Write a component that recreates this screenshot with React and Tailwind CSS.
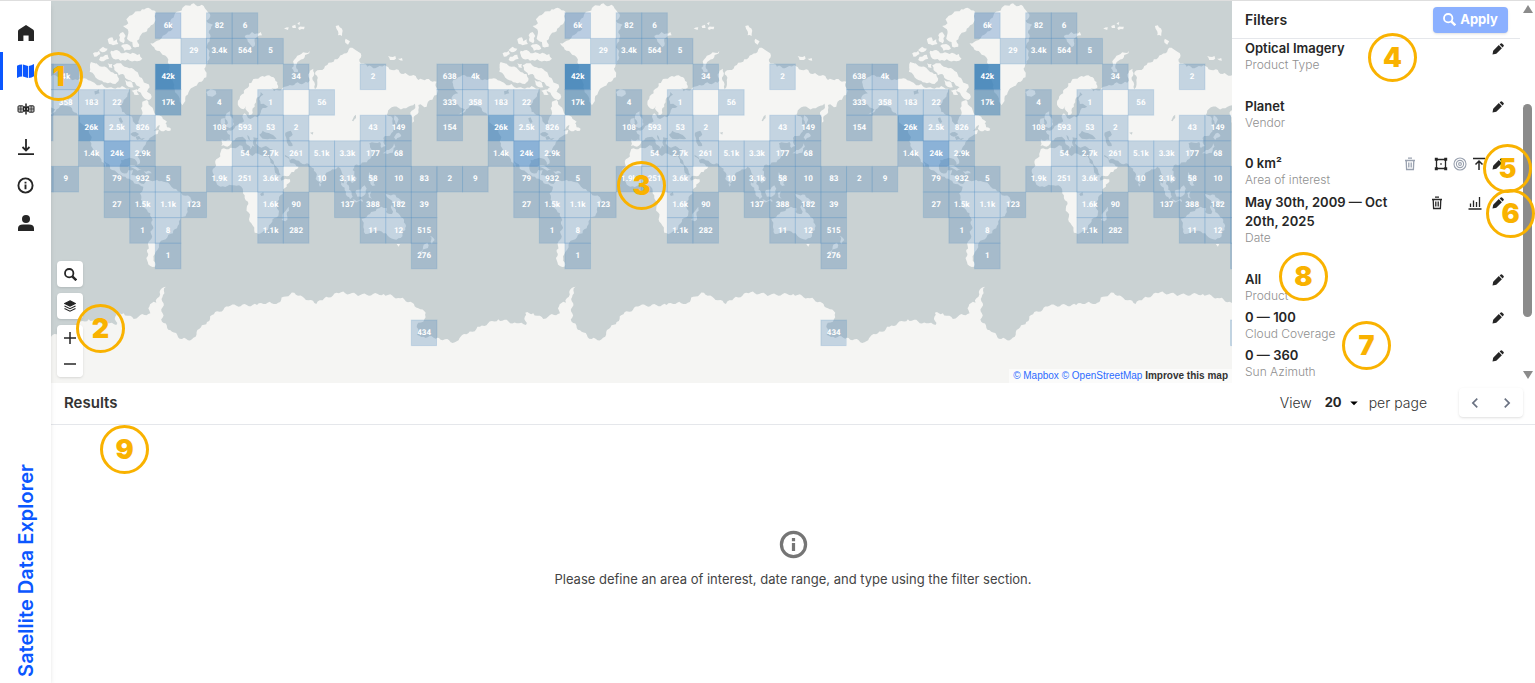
import { useState } from 'react';
import { MdArrowDropDown, MdChevronLeft, MdChevronRight } from 'react-icons/md';

// One world copy is 16 cells wide, coordinates are in thirds of a pixel
const CELL = 76.8;
const WORLD = CELL * 16;

// row: [column, label]
const CELLS = {
  1: [[5, '6k'], [7, '82'], [8, '6']],
  2: [[6, '29'], [7, '3.4k'], [8, '564'], [9, '5']],
  3: [[0, '638'], [1, '4k'], [5, '42k'], [10, '34'], [13, '2']],
  4: [[0, '333'], [1, '358'], [2, '183'], [3, '22'], [5, '17k'], [7, '4'], [9, '1'], [11, '56']],
  5: [[0, '154'], [2, '26k'], [3, '2.5k'], [4, '826'], [7, '108'], [8, '593'], [9, '53'], [10, '2'], [13, '43'], [14, '149']],
  6: [[2, '1.4k'], [3, '24k'], [4, '2.9k'], [8, '54'], [9, '2.7k'], [10, '261'], [11, '5.1k'], [12, '3.3k'], [13, '177'], [14, '68']],
  7: [[0, '2'], [1, '9'], [3, '79'], [4, '932'], [5, '5'], [7, '1.9k'], [8, '251'], [9, '3.6k'], [11, '10'], [12, '3.1k'], [13, '58'], [14, '10'], [15, '83']],
  8: [[3, '27'], [4, '1.5k'], [5, '1.1k'], [6, '123'], [9, '1.6k'], [10, '90'], [12, '137'], [13, '388'], [14, '182'], [15, '39']],
  9: [[4, '1'], [5, '8'], [9, '1.1k'], [10, '282'], [13, '11'], [14, '12'], [15, '515']],
  10: [[5, '1'], [15, '276']],
  13: [[15, '434']],
};

const HEAT = {
  '42k': ['#3d82ba', 0.85],
  '26k': ['#4485bf', 0.65],
  '24k': ['#4485c4', 0.6],
  '17k': ['#4a86b8', 0.55],
  '6k': ['#5a8cc8', 0.38],
  '4k': ['#5285b8', 0.36],
};

// Land west of the Atlantic
const WEST = [
  '160 240 175 232 195 226 215 233 240 237 262 240 275 236 300 242 312 248 320 256 335 252 350 264 375 266 395 258 417 266 415 275 400 300 388 318 395 335 410 345 425 350 437 374 445 372 447 358 455 345 452 325 456 305 470 300 480 318 490 332 498 345 515 350 530 365 525 376 500 380 490 392 505 390 502 402 488 408 478 414 468 425 460 440 455 455 442 470 449 490 441 494 433 477 410 476 392 480 388 500 395 518 410 520 415 510 428 510 423 525 440 530 445 546 460 552 472 548 472 556 452 558 438 552 422 540 405 530 385 522 365 510 350 490 336 468 342 485 347 502 334 485 325 468 310 450 303 430 300 405 295 390 275 372 262 345 245 325 232 318 215 315 205 325 190 338 172 346 195 328 180 322 165 310 155 300 160 285 175 280 165 270 160 258',
  '303 195 318 190 335 200 350 203 362 216 380 222 386 236 375 252 352 250 335 242 322 238 312 225 298 215',
  '302 186 315 190 322 202 308 210 299 200',
  '368 196 392 190 410 202 430 208 445 224 458 240 478 262 470 275 484 290 476 300 458 290 440 272 450 262 432 246 415 240 398 222 385 226 372 210',
  '412 88 398 78 414 70 408 58 425 45 455 28 480 26 497 36 496 60 482 76 470 94 452 104 440 122 446 140 428 140 426 126 410 116 414 100',
  '362 152 380 150 392 160 420 162 448 162 456 176 440 184 412 178 390 182 364 170',
  '308 160 326 152 330 162 312 170',
  '326 150 338 140 352 146 342 156 330 154',
  '352 118 366 112 370 124 380 118 384 132 368 136 356 132',
  '330 170 352 164 356 176 340 184 326 180',
  '386 106 398 96 406 108 400 130 388 124',
  '392 138 410 132 424 146 402 152',
  '352 190 366 192 366 204 356 202',
  '404 240 420 244 430 262 414 260',
  '424 272 440 268 446 284 432 284',
  '505 386 516 366 528 372 530 382 542 386 540 392 526 390 514 394',
  '530 100 548 82 540 62 552 46 576 24 604 12 640 18 650 32 660 48 648 62 668 74 656 92 658 116 650 136 656 160 652 190 642 206 648 232 626 246 608 262 598 270 586 288 576 316 568 304 560 282 550 262 546 240 538 214 536 194 530 172 512 158 486 138 480 130 500 122 514 114',
  '648 276 660 268 676 272 678 282 666 290 652 288',
  '412 500 424 496 440 502 454 510 442 512 428 504',
  '460 514 474 512 484 520 468 522',
  '460 553 475 540 486 544 500 540 520 545 538 553 550 566 570 575 577 586 600 592 606 604 592 622 588 642 570 658 562 678 548 700 534 704 526 718 512 722 506 742 496 756 490 776 494 800 480 798 470 780 470 750 480 720 485 690 487 660 480 640 465 625 452 600 449 580 458 568',
];

// Land east of the Atlantic
const EAST = [
  '123 447 150 443 185 438 188 455 200 462 215 468 225 460 240 465 262 468 270 480 282 510 294 530 302 542 328 538 318 560 300 585 290 605 294 640 275 665 262 690 240 700 222 698 212 670 198 625 202 605 187 580 182 560 160 556 140 558 120 560 103 542 97 520 104 490 118 462',
  '324 620 325 632 314 664 303 660 306 642 314 634',
  '122 438 123 418 148 420 148 405 138 394 156 390 172 375 190 364 185 350 192 340 202 354 230 352 240 338 246 324 262 320 240 312 236 298 248 284 240 276 226 300 222 320 212 344 204 346 196 318 188 328 175 320 172 302 190 280 205 250 225 236 245 228 272 230 290 246 292 264 272 264 280 274 304 266 322 258 345 250 382 248 388 212 398 206 396 240 403 268 410 246 404 216 425 210 440 195 462 178 485 164 515 143 528 152 540 160 536 184 560 200 590 202 612 196 626 208 648 208 668 222 698 225 713 240 738 237 768 245 768 285 748 300 738 320 713 315 713 330 695 368 690 345 708 305 683 320 668 325 633 322 618 345 636 355 640 378 632 400 608 414 615 438 603 444 598 426 582 428 566 430 568 442 578 456 562 480 540 494 522 496 516 510 528 534 514 550 504 540 498 552 512 582 500 576 490 546 484 520 472 500 450 512 428 530 420 550 410 542 400 506 385 492 360 488 340 476 328 480 312 464 330 490 354 500 340 516 300 535 285 506 268 472 276 448 262 442 236 440 226 430 232 414 218 412 222 440 208 420 200 404 216 434 208 448 196 420 186 410 172 412 154 424 140 440',
  '138 340 148 334 150 350 160 372 152 382 134 382 142 370 134 356',
  '122 356 132 354 134 370 122 374',
  '333 204 342 178 362 162 387 153 372 172 356 182 346 198 352 216 340 216',
  '192 108 206 104 214 96 222 102 240 96 244 106 228 112 216 142 206 130 200 118',
  '310 86 324 82 322 90', '334 78 344 74 346 84 336 84', '350 70 358 66 356 76', '352 84 372 80 370 88 356 90',
  '465 78 474 76 486 92 484 108 472 106 472 94', '495 116 508 124 502 134 494 128',
  '622 168 644 168 646 176 628 180', '652 176 664 174 666 182',
  '606 460 618 450 630 446 640 430 644 440 636 458 620 462', '640 412 654 398 662 408 646 420', '642 346 650 352 652 378 644 370',
  '478 536 500 560 516 590 508 598 492 570', '516 598 546 600 546 606 520 604',
  '524 576 544 562 552 556 558 566 548 588 530 590', '562 578 572 574 568 584 574 596 564 592', '566 516 576 530 584 556 576 558 566 536',
  '608 578 624 584 644 584 660 600 672 612 654 608 636 608 622 594',
  '543 656 568 642 588 626 602 620 618 624 616 636 634 642 634 614 646 636 658 646 674 672 674 690 660 714 640 718 626 712 616 700 596 692 570 698 554 702 548 682',
  '648 732 658 732 654 740', '748 708 762 720 754 732', '740 728 744 736 724 756 712 760',
  '416 548 422 554 418 560',
];

const LAKES = {
  west: [
    '420 402 436 396 446 402 440 408 426 408', '436 410 446 408 452 416 464 414 456 420 440 420', '385 355 392 352 398 366 392 370', '312 274 326 268 328 280 314 284', '300 304 316 298 322 304 306 308',
  ],
  east: [
    '236 404 246 392 258 398 270 402 288 416 268 416 246 416', '314 398 330 392 336 404 326 412 336 438 324 438 318 420', '514 362 526 344 526 354 518 364', '238 582 248 576 250 586 242 588', '268 474 276 480 300 524 292 526', '388 398 398 396 396 404',
  ],
};

const ICE = '111 1013 165 1027 182 1010 205 1000 240 980 295 958 350 970 378 975 376 938 400 940 430 957 450 945 480 940 474 925 490 905 498 908 510 870 527 860 518 885 515 965 545 995 575 1017 605 1018 632 982 650 966 665 945 720 917 800 915 838 905 858 912 880 890 912 878 937 890 978 912 1002 895 1052 877 1110 885 1180 882 1230 895 1266 908 1284 925 1306 938 1302 958 1280 975 1281 1005 1300 1010 1342 1013 1342 1300 111 1300';

// Breaks every straight edge up so that the coast gets a rough outline
function coast(text, amount = 4) {
  const n = text.split(' ').map(Number);
  const pts = [];
  for (let i = 0; i < n.length; i += 2) pts.push([n[i], n[i + 1]]);
  const out = [];
  pts.forEach(([x, y], i) => {
    const [x2, y2] = pts[(i + 1) % pts.length];
    const len = Math.hypot(x2 - x, y2 - y);
    out.push(`${x} ${y}`);
    if (len > 250) return;
    const steps = Math.floor(len / 6);
    for (let s = 1; s < steps; s++) {
      const wobble = Math.sin(x * 12.9 + y * 7.2 + s * 5.1) * Math.min(amount, len / 7);
      const t = s / steps;
      out.push(`${(x + (x2 - x) * t - ((y2 - y) / len) * wobble).toFixed(1)} ${(y + (y2 - y) * t + ((x2 - x) / len) * wobble).toFixed(1)}`);
    }
  });
  return `M${out.join('L')}Z`;
}

const WEST_PATH = WEST.map((p) => coast(p)).join('');
const EAST_PATH = EAST.map((p) => coast(p)).join('');
const WEST_LAKES = LAKES.west.map((p) => coast(p, 2)).join('');
const EAST_LAKES = LAKES.east.map((p) => coast(p, 2)).join('');
const ICE_PATH = coast(ICE);

function World({ x }) {
  return (
    <g transform={`translate(${x} 0)`}>
      <g fill="#f5f5f3">
        <path d={WEST_PATH} transform="translate(-111 0)" />
        <path d={EAST_PATH} transform="translate(460 0)" />
        <path d={ICE_PATH} transform="translate(-111 0)" />
      </g>
      <g fill="#cad2d3">
        <path d={WEST_LAKES} transform="translate(-111 0)" />
        <path d={EAST_LAKES} transform="translate(460 0)" />
      </g>
      {Object.entries(CELLS).map(([row, cells]) =>
        cells.map(([col, label]) => {
          const [fill, opacity] = HEAT[label] || ['#5289b8', 0.3];
          const top = CELL * (row - 0.5);
          return (
            <g key={`${row}-${col}`}>
              <rect x={col * CELL} y={top} width={CELL} height={CELL} fill={fill} fillOpacity={opacity} stroke="#4a8cc4" strokeOpacity="0.2" strokeWidth="3" />
              <text x={(col + 0.5) * CELL} y={top + 45} textAnchor="middle" fontSize="24" fontWeight="700" fill="#fff">{label}</text>
            </g>
          );
        })
      )}
    </g>
  );
}

function WorldMap() {
  return (
    <svg viewBox="0 3 3543 1152" preserveAspectRatio="xMinYMin slice" className="block h-full w-full bg-[#cad2d3] font-['Roboto',sans-serif] [text-rendering:geometricPrecision]" role="img" aria-label="World map">
      {[-71, WORLD - 71, WORLD * 2 - 71].map((x) => <World key={x} x={x} />)}
    </svg>
  );
}

function HomeIcon() {
  return (
    <svg viewBox="0 0 16 16" width="16" height="16" fill="currentColor">
      <path d="M8 0l7 4.6q1 .7 1 2V16h-5.4v-5.6H5.4V16H0V6.6q0-1.3 1-2z" />
    </svg>
  );
}

function MapIcon() {
  return (
    <svg viewBox="0 0 17 14" width="17" height="14" fill="currentColor">
      <path d="M0 1.8Q2.6.2 5.2.4v12.2Q2.6 12.6 0 14zM6 .4l5 1.5v12l-5-1.4zM11.8 1.9Q14.6 1.6 17 0v12.2q-2.4 1.6-5.2 1.7z" />
    </svg>
  );
}

function SatelliteIcon() {
  return (
    <svg viewBox="0 0 18 12" width="18" height="12" fill="none" stroke="currentColor">
      <rect x="1" y="2.8" width="5.5" height="6.4" rx="1" fill="#b5b5b5" />
      <rect x="11.5" y="2.8" width="5.5" height="6.4" rx="1" fill="#b5b5b5" />
      <path d="M1 6h5.5M11.5 6H17M3.8 3v6M14.2 3v6" strokeWidth=".7" />
      <path d="M9 .5v11M7 3.5l4 5M11 3.5l-4 5" strokeWidth="1.5" />
    </svg>
  );
}

function DownloadIcon() {
  return (
    <svg viewBox="0 0 18 18" width="18" height="18" fill="none" stroke="currentColor" strokeWidth="1.8">
      <path d="M9 1v11M5.5 9L9 12.5 12.5 9M1 16.2h16" />
    </svg>
  );
}

function InfoIcon({ size }) {
  return (
    <svg viewBox="0 0 18 18" width={size} height={size} fill="none" stroke="currentColor" strokeWidth="2">
      <circle cx="9" cy="9" r="7.5" />
      <path d="M9 8v5M9 5v2" />
    </svg>
  );
}

function PersonIcon() {
  return (
    <svg viewBox="0 0 16 16" width="16" height="16" fill="currentColor">
      <circle cx="8" cy="4" r="4" />
      <path d="M0 16v-2.5Q0 9.5 5 9.5h6q5 0 5 4V16z" />
    </svg>
  );
}

function SearchIcon() {
  return (
    <svg viewBox="0 0 13 13" width="13" height="13" fill="none" stroke="currentColor">
      <circle cx="5.2" cy="5.2" r="4.2" strokeWidth="1.8" />
      <path d="M8.3 8.3l4 4" strokeWidth="2.4" />
    </svg>
  );
}

function LayersIcon() {
  return (
    <svg viewBox="0 0 12 12" width="12" height="12" fill="none" stroke="currentColor" strokeWidth="1.1">
      <path d="M6 .8l5.2 2.7L6 6.2.8 3.5z" fill="currentColor" />
      <path d="M.5 6L6 8.7 11.5 6M.5 8.5L6 11.2l5.5-2.7" />
    </svg>
  );
}

function PencilIcon() {
  return (
    <svg viewBox="0 0 12 12" width="12" height="12" fill="currentColor">
      <path d="M.5 11.5l.7-3.8L6.8 2.1l3.1 3.1-5.6 5.6zM7.6 1.4L8.8.4q.6-.5 1.2 0l1.6 1.6q.5.6 0 1.2l-1 1.2z" />
    </svg>
  );
}

function TrashIcon() {
  return (
    <svg viewBox="0 0 12 14" width="12" height="14" fill="none" stroke="currentColor" strokeWidth="1.3">
      <path d="M1 3.5h10M4 1.2h4M2.2 3.5l.4 9h6.8l.4-9M4.8 5.5v5M7.2 5.5v5" />
    </svg>
  );
}

function AreaIcon() {
  return (
    <svg viewBox="0 0 14 14" width="14" height="14" fill="currentColor">
      <path d="M2.5 2.5h9v9h-9z" fill="none" stroke="currentColor" strokeWidth="1.3" />
      <path d="M.8.8h3v3h-3zM10.2.8h3v3h-3zM.8 10.2h3v3h-3zM10.2 10.2h3v3h-3zM6.3 6.3h1.4v1.4H6.3z" />
    </svg>
  );
}

function TargetIcon() {
  return (
    <svg viewBox="0 0 14 14" width="14" height="14" fill="none" stroke="currentColor" strokeWidth="1.1">
      <circle cx="7" cy="7" r="6" />
      <circle cx="7" cy="7" r="3.6" />
      <circle cx="7" cy="7" r="1.4" />
    </svg>
  );
}

function UploadIcon() {
  return (
    <svg viewBox="0 0 14 14" width="14" height="14" fill="none" stroke="currentColor" strokeWidth="1.5">
      <path d="M1 1.5h12M7 13V4M3.5 7.5L7 4l3.5 3.5" />
    </svg>
  );
}

function ChartIcon() {
  return (
    <svg viewBox="0 0 14 14" width="14" height="14" fill="none" stroke="currentColor" strokeWidth="1.3">
      <path d="M.5 13h13M2.5 11V7.5M5.5 11V4.5M8.5 11V6M11.5 11V1" />
    </svg>
  );
}

const NAV = [
  { label: 'Home', icon: <HomeIcon /> },
  { label: 'Map', icon: <MapIcon /> },
  { label: 'Satellites', icon: <SatelliteIcon /> },
  { label: 'Downloads', icon: <DownloadIcon /> },
  { label: 'Info', icon: <InfoIcon size={17} /> },
  { label: 'Account', icon: <PersonIcon /> },
];

function Sidebar() {
  return (
    <aside className="z-10 flex w-[51px] shrink-0 flex-col justify-between bg-white shadow-md">
      <nav className="flex flex-col pt-[13px]">
        {NAV.map(({ label, icon }) => (
          <a
            key={label}
            href="#"
            aria-label={label}
            className={label === 'Map'
              ? 'flex h-[38px] items-center justify-center border-l-3 border-[#0b57ff] pr-[3px] text-[#0b57ff]'
              : 'flex h-[38px] items-center justify-center text-[#262626]'}
          >
            {icon}
          </a>
        ))}
      </nav>
      <h1 className="rotate-180 self-center pt-[6px] text-[20px] leading-[30px] font-semibold text-[#0b57ff] [writing-mode:vertical-rl]">
        Satellite Data Explorer
      </h1>
    </aside>
  );
}

function MapControls() {
  const button = 'flex h-[26px] w-[26px] items-center justify-center bg-white text-[#262626]';
  return (
    <div className="absolute bottom-[6px] left-[6px] flex flex-col gap-[6px]">
      <button aria-label="Search" className={`${button} rounded shadow`}><SearchIcon /></button>
      <button aria-label="Layers" className={`${button} rounded shadow`}><LayersIcon /></button>
      <div className="flex flex-col rounded shadow">
        <button aria-label="Zoom in" className={`${button} rounded-t`}>
          <svg viewBox="0 0 12 12" width="12" height="12" stroke="currentColor" strokeWidth="1.5"><path d="M0 6h12M6 0v12" /></svg>
        </button>
        <button aria-label="Zoom out" className={`${button} rounded-b`}>
          <svg viewBox="0 0 12 12" width="12" height="12" stroke="currentColor" strokeWidth="1.5"><path d="M0 6h12" /></svg>
        </button>
      </div>
    </div>
  );
}

function Filter({ title, label, className = '', children }) {
  return (
    <div className={`flex shrink-0 items-start pr-4 pl-[13px] ${className}`}>
      <div className="w-[150px]">
        <p className="text-[13px] leading-[19px] font-semibold text-[#262626]">{title}</p>
        <p className="text-[12px] leading-[13px] font-light text-[#8f8f8f]">{label}</p>
      </div>
      <div className="ml-auto flex h-[19px] items-center text-[#262626]">
        {children}
        <button aria-label={`Edit ${label}`}><PencilIcon /></button>
      </div>
    </div>
  );
}

function Filters() {
  return (
    <section className="flex w-[303px] shrink-0 bg-white">
      <div className="flex min-w-0 flex-1 flex-col overflow-hidden">
        <header className="flex h-[38px] shrink-0 items-center justify-between border-b border-gray-200 pr-3 pl-[13px]">
          <h2 className="text-[14px] font-semibold text-[#262626]">Filters</h2>
          <button className="flex h-[26px] w-[75px] items-center justify-center gap-1 rounded-sm bg-[#8bb0ff] text-[13px] font-bold text-white shadow">
            <SearchIcon />
            Apply
          </button>
        </header>
        <div className="flex flex-1 flex-col overflow-hidden">
          <Filter title="Optical Imagery" label="Product Type" className="h-[58px]" />
          <Filter title="Planet" label="Vendor" className="h-[57px]" />
          <Filter title="0 km²" label="Area of interest" className="h-[39px]">
            <button aria-label="Clear area" className="mr-[18px] text-gray-400" disabled><TrashIcon /></button>
            <button aria-label="Draw area" className="mr-[5px]"><AreaIcon /></button>
            <button aria-label="Point and radius" className="mr-[5px] text-gray-400" disabled><TargetIcon /></button>
            <button aria-label="Upload area" className="mr-[6px]"><UploadIcon /></button>
          </Filter>
          <Filter title="May 30th, 2009 — Oct 20th, 2025" label="Date" className="h-[77px]">
            <button aria-label="Clear date" className="mr-[25px]"><TrashIcon /></button>
            <button aria-label="Date histogram" className="mr-[10px]"><ChartIcon /></button>
          </Filter>
          <Filter title="All" label="Product" className="h-[38px]" />
          <Filter title="0 — 100" label="Cloud Coverage" className="h-[38px]" />
          <Filter title="0 — 360" label="Sun Azimuth" className="h-[38px]" />
        </div>
      </div>
      <div className="flex w-[15px] shrink-0 flex-col items-center py-[4px]" aria-hidden="true">
        <svg viewBox="0 0 10 8" width="10" height="8" fill="#8b8b8b"><path d="M5 0l5 8H0z" /></svg>
        <div className="flex w-full flex-1 flex-col items-center">
          <div className="flex-[91]" />
          <div className="w-[9px] flex-[212] rounded-full bg-[#8b8b8b]" />
          <div className="flex-[54]" />
        </div>
        <svg viewBox="0 0 10 8" width="10" height="8" fill="#8b8b8b"><path d="M5 8l5-8H0z" /></svg>
      </div>
    </section>
  );
}

function Results() {
  const [perPage, setPerPage] = useState('20');

  return (
    <section className="flex flex-1 flex-col bg-white">
      <header className="flex h-[42px] shrink-0 items-center border-b border-gray-200 pr-3 pb-[2px] pl-[13px]">
        <h2 className="text-[15px] font-semibold text-[#333]">Results</h2>
        <label htmlFor="per-page" className="mr-[13px] ml-auto text-[14px] font-light text-[#333]">View</label>
        <div className="relative flex w-9 items-center">
          <select
            id="per-page"
            value={perPage}
            onChange={(e) => setPerPage(e.target.value)}
            className="w-full appearance-none bg-transparent text-[13px] font-bold text-[#262626]"
          >
            <option>20</option>
            <option>50</option>
            <option>100</option>
          </select>
          <MdArrowDropDown size={18} className="pointer-events-none absolute -right-[2px]" />
        </div>
        <span className="ml-2 text-[14px] font-light text-[#333]">per page</span>
        <div className="ml-8 flex h-[29px] w-[64px] items-center justify-around rounded bg-white text-gray-500 shadow-sm">
          <button aria-label="Previous page"><MdChevronLeft size={20} /></button>
          <button aria-label="Next page"><MdChevronRight size={20} /></button>
        </div>
      </header>
      <div className="flex flex-1 flex-col items-center justify-center gap-[10px] pt-[10px] text-[#757575]">
        <InfoIcon size={29} />
        <p className="text-[13px] leading-[20px] text-[#444]">Please define an area of interest, date range, and type using the filter section.</p>
      </div>
    </section>
  );
}

function Marker({ n, className }) {
  return (
    <span className={`pointer-events-none absolute z-20 flex h-[49px] w-[49px] items-center justify-center rounded-full border-3 border-[#f9b200] text-[27px] leading-none font-black text-[#f9b200] ${className}`}>
      {n}
    </span>
  );
}

export default function App() {
  return (
    <div className="relative flex h-screen overflow-hidden border-t border-[#dedede] bg-white font-[Inter,sans-serif]">
      <Sidebar />
      <main className="flex min-w-0 flex-1 flex-col">
        <div className="flex h-[56vh] shrink-0">
          <div className="relative min-w-0 flex-1 overflow-hidden">
            <WorldMap />
            <MapControls />
            <div className="absolute right-0 bottom-0 bg-white/60 px-1 font-['Liberation_Sans',sans-serif] text-[10px] leading-[14px] text-[#333]">
              <a href="#" className="text-[#2d6bff]">© Mapbox</a>{' '}
              <a href="#" className="text-[#2d6bff]">© OpenStreetMap</a>{' '}
              <a href="#" className="font-bold">Improve this map</a>
            </div>
          </div>
          <Filters />
        </div>
        <Results />
      </main>
      <Marker n="1" className="top-[51px] left-[34px]" />
      <Marker n="2" className="top-[303px] left-[76px]" />
      <Marker n="3" className="top-[160px] left-[617px]" />
      <Marker n="4" className="top-[32px] right-[118px]" />
      <Marker n="5" className="top-[143px] right-[3px]" />
      <Marker n="6" className="top-[188px] right-0" />
      <Marker n="7" className="top-[320px] right-[144px]" />
      <Marker n="8" className="top-[251px] right-[207px]" />
      <Marker n="9" className="top-[424px] left-[100px]" />
    </div>
  );
}
